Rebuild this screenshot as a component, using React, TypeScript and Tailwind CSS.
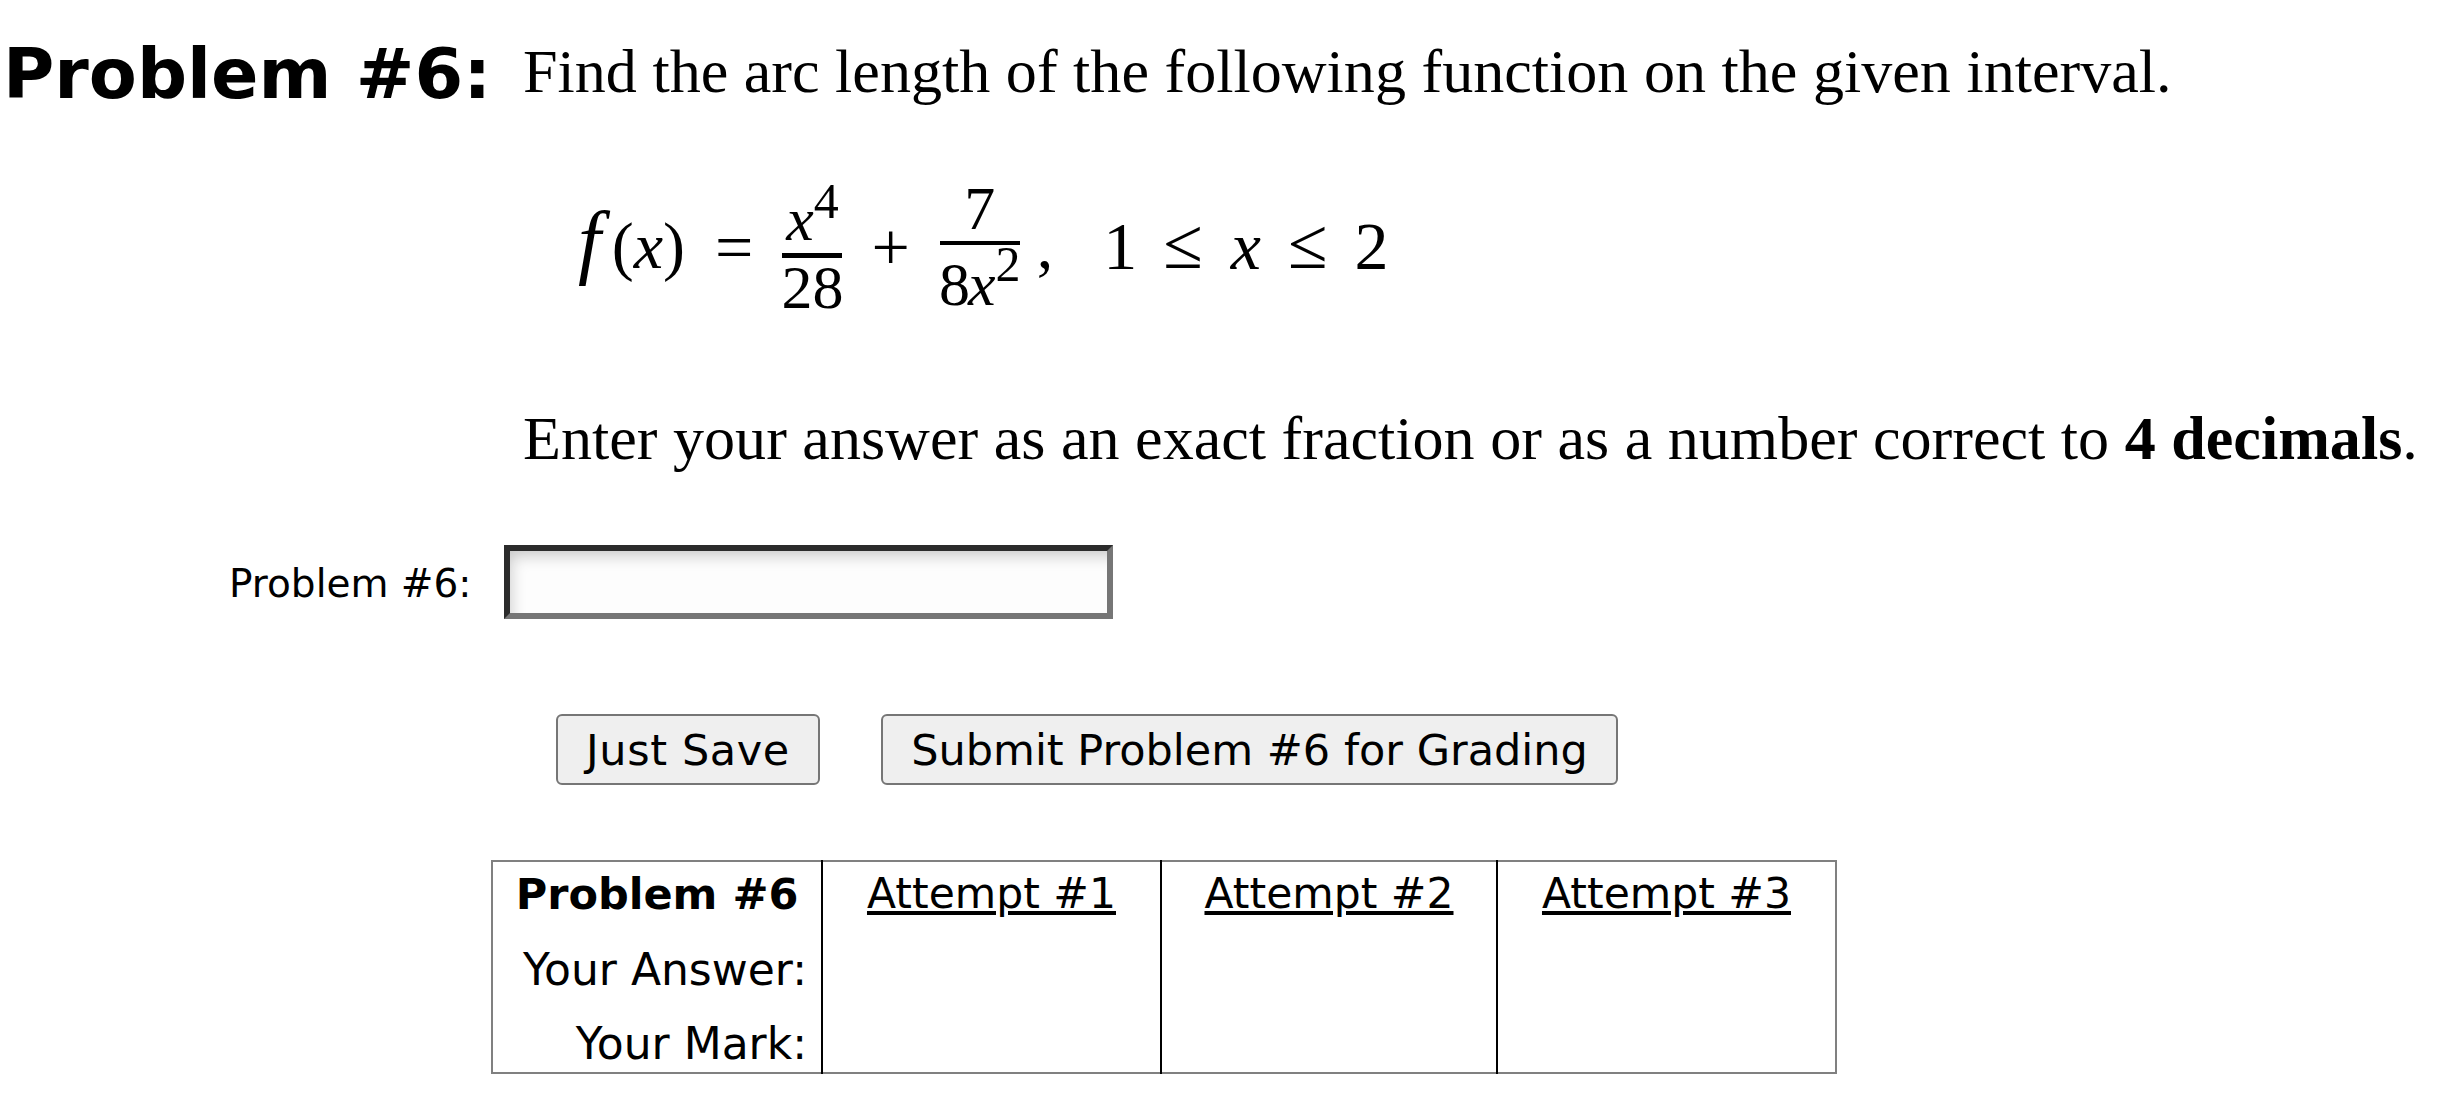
const serif = "font-['Liberation_Serif',serif]";
const sans = "font-['DejaVu_Sans',sans-serif]";

function Sup({ children, className }: { children: React.ReactNode; className: string }) {
  return <span className={`text-[50px] leading-[0] not-italic ${className}`}>{children}</span>;
}

function Equation() {
  return (
    <div className={`${serif} ml-[578px] mt-[70px] flex h-[150px] items-start text-[62px] leading-none text-black`}>
      <div className="mt-[20px] flex items-baseline text-[66px] italic">
        <span className="text-[82px]">f</span>
        <span className="ml-[11px] not-italic">(</span>
        <span>x</span>
        <span className="not-italic">)</span>
      </div>
      <div className="ml-[30px] mt-[33px] text-[68px]">=</div>
      <div className="ml-[29px] flex w-[60px] flex-col items-center">
        <div className="mt-[8px] h-[65px] whitespace-nowrap italic">
          x<Sup className="align-[22px]">4</Sup>
        </div>
        <div className="h-[5px] w-full bg-black" />
        <div className="mt-[-2px]">28</div>
      </div>
      <div className="ml-[29px] mt-[33px] text-[68px]">+</div>
      <div className="ml-[30px] flex w-[80px] flex-col items-center">
        <div className="mt-[-3px] h-[64px]">7</div>
        <div className="h-[4px] w-full bg-black" />
        <div className="mt-[8px] whitespace-nowrap">
          8<i className="ml-[-2px]">x</i>
          <Sup className="align-[24px]">2</Sup>
        </div>
      </div>
      <div className="ml-[17px] mt-[33px] text-[66px]">,</div>
      <div className="ml-[50px] mt-[32px] text-[68px]">1</div>
      <div className="ml-[26px] mt-[28px] text-[72px]">≤</div>
      <div className="ml-[28px] mt-[32px] text-[68px] italic">x</div>
      <div className="ml-[27px] mt-[28px] text-[72px]">≤</div>
      <div className="ml-[27px] mt-[32px] text-[68px]">2</div>
    </div>
  );
}

const cellLine = "border-l-2 border-black";
const buttonClass = `${sans} h-[71px] rounded-[6px] border-2 border-[#767676] bg-[#efefef] pt-[2px] text-[43px] leading-none`;

export default function App() {
  return (
    <div className="min-h-screen bg-white text-black">
      <div className="flex h-[110px] items-start">
        <h1 className={`${sans} ml-[3px] mt-[39px] w-[520px] shrink-0 text-[70px] leading-none font-bold`}>Problem #6:</h1>
        <p className={`${serif} mt-[40px] text-[62.1px] leading-none whitespace-nowrap`}>
          Find the arc length of the following function on the given interval.
        </p>
      </div>

      <Equation />

      <p className={`${serif} ml-[523px] mt-[77px] text-[62.1px] leading-none whitespace-nowrap`}>
        Enter your answer as an exact fraction or as a number correct to <b>4 decimals</b>.
      </p>

      <div className="mt-[76px] flex items-center">
        <label className={`${sans} ml-[229px] pt-[2px] text-[39px] leading-none`}>Problem #6:</label>
        <input className="ml-[33px] h-[74px] w-[609px] border-[6px] border-t-[#2b2b2b] border-r-[#767676] border-b-[#767676] border-l-[#2b2b2b] bg-[#fdfdfd] shadow-[inset_8px_12px_16px_-8px_#c4c4c4]" />
      </div>

      <div className="ml-[556px] mt-[95px] flex gap-[61px]">
        <button className={`${buttonClass} w-[264px] tracking-[0.6px]`}>Just Save</button>
        <button className={`${buttonClass} w-[737px]`}>Submit Problem #6 for Grading</button>
      </div>

      <table className={`${sans} ml-[491px] mt-[75px] w-[1346px] table-fixed border-collapse border-2 border-[#808080] text-[42.5px] leading-none`}>
        <tbody>
          <tr className="h-[62px]">
            <td className="w-[330px] pt-[3px] text-center text-[43px] font-bold">Problem #6</td>
            <td className={`${cellLine} w-[339px] pt-[3px] text-center underline`}>Attempt #1</td>
            <td className={`${cellLine} w-[336px] pt-[3px] text-center underline`}>Attempt #2</td>
            <td className={`${cellLine} pt-[3px] text-center underline`}>Attempt #3</td>
          </tr>
          <tr className="h-[88px]">
            <td className="pt-[5px] pr-[14px] text-right text-[44px]">Your Answer:</td>
            <td className={cellLine} />
            <td className={cellLine} />
            <td className={cellLine} />
          </tr>
          <tr className="h-[62px]">
            <td className="pt-[5px] pr-[14px] text-right text-[44px]">Your Mark:</td>
            <td className={cellLine} />
            <td className={cellLine} />
            <td className={cellLine} />
          </tr>
        </tbody>
      </table>
    </div>
  );
}
